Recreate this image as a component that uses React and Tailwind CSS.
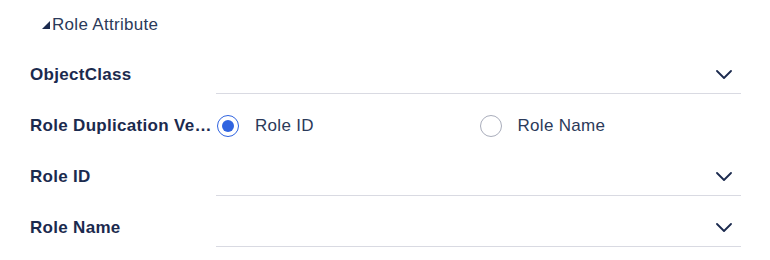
import React, { useState } from 'react';

const Chevron = () => (
  <svg width="16" height="9" viewBox="0 0 16 9" fill="none" className="mr-[9px]">
    <path d="M1 1l7 7 7-7" stroke="#1b2a4e" strokeWidth="1.8" strokeLinecap="round" strokeLinejoin="round" />
  </svg>
);

const SelectField = ({ label }) => (
  <div className="flex items-center h-[51px]">
    <div className="w-[186px] shrink-0 font-bold truncate">{label}</div>
    <div className="flex-1 h-[39px] flex items-center justify-end border-b border-[#d9dae2]">
      <Chevron />
    </div>
  </div>
);

const Radio = ({ checked, label, onClick }) => (
  <button type="button" onClick={onClick} className="flex items-center gap-[16px] pl-[1px]">
    <span
      className={
        checked
          ? 'w-[22px] h-[22px] rounded-full border border-[#2f63e0] flex items-center justify-center'
          : 'w-[22px] h-[22px] rounded-full border border-[#a9adbb] flex items-center justify-center'
      }
    >
      {checked && <span className="w-[12px] h-[12px] rounded-full bg-[#2f63e0]" />}
    </span>
    <span className="text-[#2b3a5a]">{label}</span>
  </button>
);

export default function App() {
  const [dup, setDup] = useState('id');

  return (
    <div className="bg-white w-[770px] h-[260px] pl-[30px] pr-[29px] text-[#1b2a4e] text-[17px] tracking-[0.3px] font-['Liberation_Sans',Arial,sans-serif]">
      <div className="h-[49px] flex items-center pl-[12px] text-[#2b3a5a]">
        <svg width="8" height="8" viewBox="0 0 8 8" className="mr-[2px] mt-[1px]">
          <path d="M8 0L8 8L0 8Z" fill="#1b2a4e" />
        </svg>
        Role Attribute
      </div>

      <SelectField label="ObjectClass" />

      <div className="flex items-center h-[51px]">
        <div className="w-[186px] shrink-0 font-bold truncate">Role Duplication Verification</div>
        <div className="flex-1 grid grid-cols-2">
          <Radio checked={dup === 'id'} label="Role ID" onClick={() => setDup('id')} />
          <Radio checked={dup === 'name'} label="Role Name" onClick={() => setDup('name')} />
        </div>
      </div>

      <SelectField label="Role ID" />
      <SelectField label="Role Name" />
    </div>
  );
}
